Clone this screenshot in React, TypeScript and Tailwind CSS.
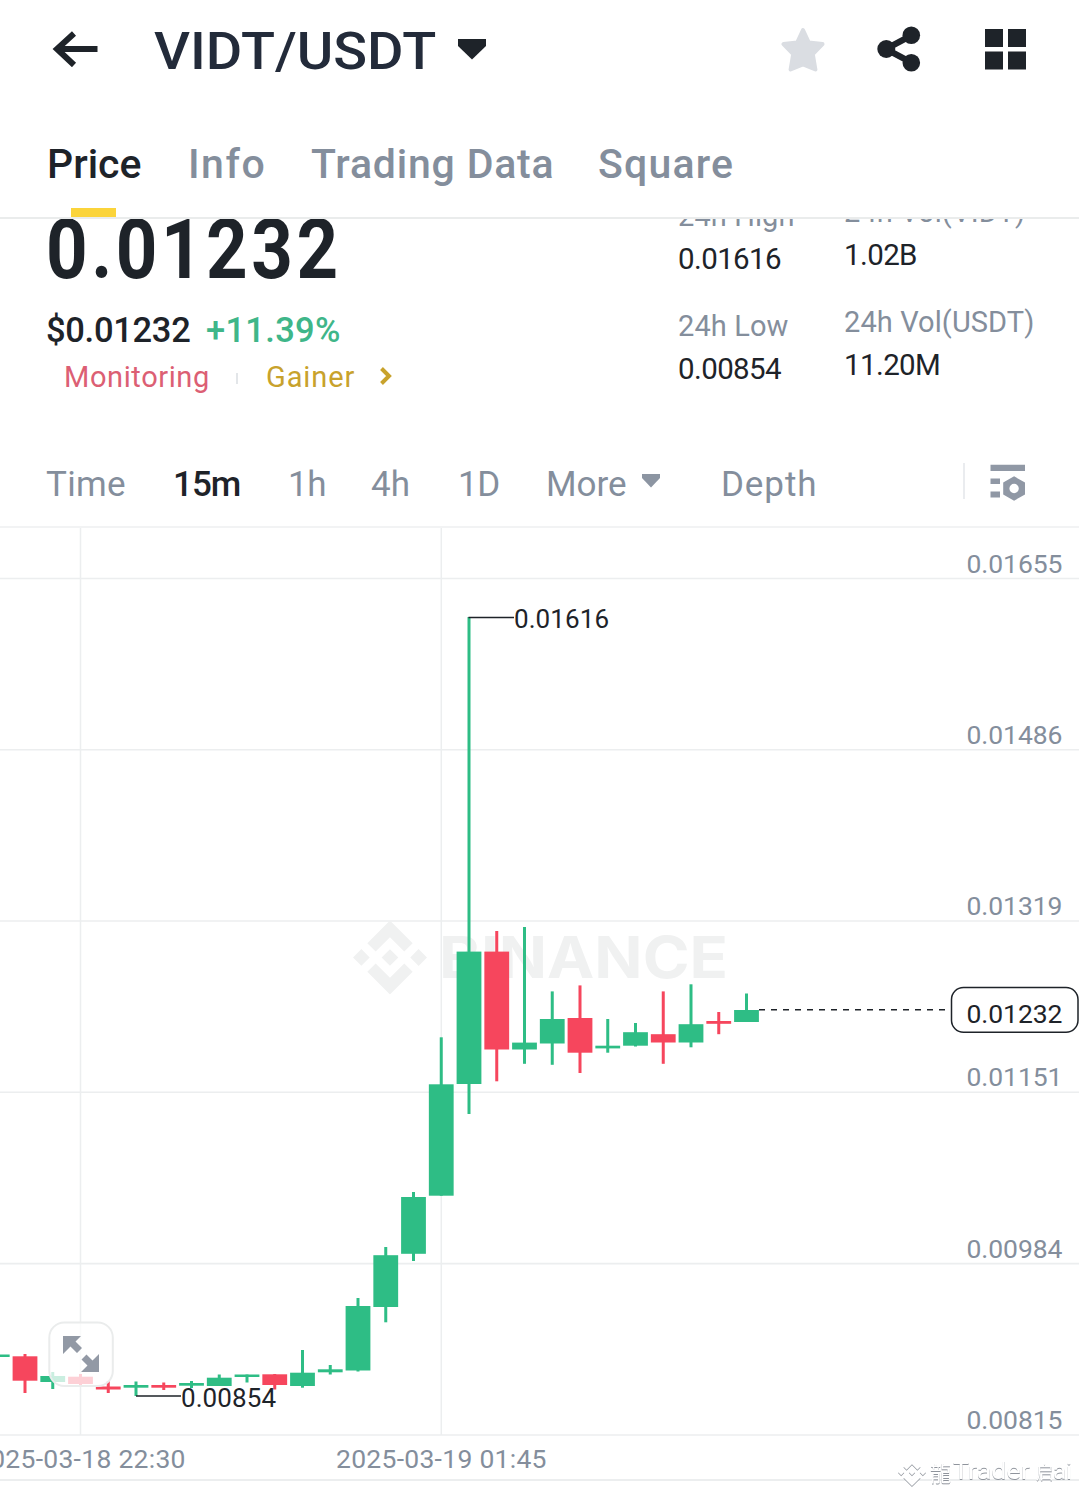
import { ReactNode } from 'react';
import { SiBinance } from 'react-icons/si';

const UP = '#2ebd85';
const DOWN = '#f6465d';
const GRID = '#eceeef';

type Candle = {
    open: number;
    close: number;
    high: number;
    low: number;
    up: boolean;
};

// y values on the chart canvas: [body top, body bottom, wick top, wick bottom, rising]
const rows: [number, number, number, number, boolean][] = [
    [1354.5, 1357, 1354.5, 1357, true],
    [1356.3, 1380.7, 1354, 1393, false],
    [1376, 1382, 1372, 1389, true],
    [1376.7, 1384, 1374, 1387, false],
    [1386.5, 1389.5, 1381, 1393, false],
    [1385, 1387.7, 1381.5, 1396, true],
    [1385, 1387.7, 1382.5, 1390, false],
    [1383, 1385.7, 1381, 1388, true],
    [1377.7, 1386, 1374.5, 1386, true],
    [1374.5, 1377, 1374.5, 1382.5, true],
    [1374.3, 1385, 1374, 1389.5, false],
    [1372.7, 1386, 1350, 1387.7, true],
    [1369.3, 1372.3, 1365, 1374.5, true],
    [1306, 1370.5, 1298, 1371.5, true],
    [1255.2, 1307, 1247, 1322.3, true],
    [1197, 1253.8, 1192, 1261, true],
    [1084.3, 1195.7, 1037.3, 1195.7, true],
    [951.6, 1084, 617, 1114, true],
    [951.6, 1049.5, 931, 1081.3, false],
    [1042.6, 1049.5, 927, 1063.8, true],
    [1019, 1043.5, 991.4, 1064.8, true],
    [1018, 1052.7, 985.4, 1073, false],
    [1045.7, 1048.4, 1019, 1052.7, true],
    [1032.2, 1045.7, 1023, 1046.5, true],
    [1034.2, 1042.5, 991.4, 1063.8, false],
    [1024.2, 1042.5, 984.3, 1047.3, true],
    [1021, 1023.8, 1012, 1034.2, false],
    [1010, 1022, 993.5, 1022, true],
];

const candles: Candle[] = rows.map(([open, close, high, low, up]) => ({ open, close, high, low, up }));

const priceAxis = [
    { label: '0.01655', line: 578.5, base: 573 },
    { label: '0.01486', line: 749.8, base: 744 },
    { label: '0.01319', line: 921, base: 915 },
    { label: '0.01151', line: 1092.3, base: 1086 },
    { label: '0.00984', line: 1263.6, base: 1258 },
    { label: '0.00815', line: 1435, base: 1429 },
];

const tabs = [
    { name: 'Price', style: 'w-[141px] text-[#1e2329]' },
    { name: 'Info', style: 'w-[123px] text-[#848e9c] tracking-[1.5px]' },
    { name: 'Trading Data', style: 'w-[287px] text-[#848e9c] tracking-[0.8px]' },
    { name: 'Square', style: 'text-[#848e9c] tracking-[1.2px]' },
];

const intervals = [
    { name: 'Time', style: 'w-[127px] text-[#848e9c] tracking-[0.3px]' },
    { name: '15m', style: 'w-[115px] text-[#1e2329] font-medium tracking-[-1px]' },
    { name: '1h', style: 'w-[83px] text-[#848e9c] tracking-[-0.5px]' },
    { name: '4h', style: 'w-[87px] text-[#848e9c]' },
    { name: '1D', style: 'w-[88px] text-[#848e9c] tracking-[-0.5px]' },
];

function Stat({ label, value }: { label: string; value: ReactNode }) {
    return (
        <div className="mb-[24px] whitespace-nowrap">
            <p className="h-[43px] leading-[43px] text-[29px] text-[#848e9c] tracking-[0.1px]">{label}</p>
            <p className="h-[43px] leading-[43px] text-[29.5px] text-[#1e2329] tracking-[-0.6px]">{value}</p>
        </div>
    );
}

function Header() {
    return (
        <header className="h-[102px] flex items-center pl-[52px] pr-[53px]">
            <svg width="46" height="36" viewBox="52 31 46 36" className="-mt-1">
                <path d="M97.500 49H58M74 33.500L57 49l17 16" fill="none" stroke="#1e2329" strokeWidth="6" />
            </svg>
            <h1 className="ml-[56px] w-[304px] text-[52.5px] leading-none font-medium text-[#232b3a] origin-left scale-x-[1.063] whitespace-nowrap">VIDT/USDT</h1>
            <svg width="28" height="21" viewBox="0 0 28 21" className="-mt-1">
                <path d="M0 0h28v7L14 20.500 0 7z" fill="#1e2329" />
            </svg>
            <div className="ml-auto flex items-center -mt-1">
                <svg width="44" height="46" viewBox="0 0 44 46" className="mt-[2px]">
                    <path
                        d="M22 3l5.800 12.500 13.700 1.600-9.700 9.900 2.600 15.500L22 37.500 9.600 42.500l2.600-15.500L2.500 17.100l13.700-1.600z"
                        fill="#dadde2" stroke="#dadde2" strokeWidth="4" strokeLinejoin="round"
                    />
                </svg>
                <svg width="44" height="46" viewBox="877 26 44 46" className="ml-[52px]">
                    <path d="M911.300 35.500L886 49l25.300 13.500" fill="none" stroke="#1e2329" strokeWidth="6.500" />
                    <circle cx="911.300" cy="35.200" r="8.800" fill="#1e2329" />
                    <circle cx="886.300" cy="49" r="9" fill="#1e2329" />
                    <circle cx="911.300" cy="62.700" r="8.800" fill="#1e2329" />
                </svg>
                <svg width="41" height="41" viewBox="0 0 41 41" className="ml-[64px]" fill="#1e2329">
                    <path d="M0 0h18v18H0zM23 0h18v18H23zM0 22.500h18v18H0zM23 22.500h18v18H23z" />
                </svg>
            </div>
        </header>
    );
}

function Summary() {
    return (
        <section className="h-[221px] flex overflow-hidden">
            <div className="w-[678px] pl-[46px]">
                <p className="h-[61px] leading-[61px] text-[82.5px] font-bold text-[#1e2329] tracking-[4px] origin-left scale-x-[0.88]">0.01232</p>
                <div className="mt-[28px] h-[46px] flex items-center text-[34.5px] font-medium">
                    <span className="w-[160px] text-[#1e2329] tracking-[-0.3px]">$0.01232</span>
                    <span className="text-[#3fb689] tracking-[0.3px]">+11.39%</span>
                </div>
                <div className="h-[48px] flex items-center pl-[18px] text-[29px]">
                    <span className="w-[172px] text-[#dc5f74] tracking-[0.6px]">Monitoring</span>
                    <span className="w-[2px] h-[11px] bg-[#e3e6e9]" />
                    <span className="ml-[28px] w-[114px] text-[#c8a22c] tracking-[0.9px]">Gainer</span>
                    <svg width="12" height="18" viewBox="0 0 12 18" className="-mt-1">
                        <path d="M1.500 1.500L9 9l-7.500 7.500" fill="none" stroke="#c8a22c" strokeWidth="4" />
                    </svg>
                </div>
            </div>
            <div className="w-[166px] -mt-[24px]">
                <Stat label="24h High" value="0.01616" />
                <Stat label="24h Low" value="0.00854" />
            </div>
            <div className="-mt-[28px]">
                <Stat label="24h Vol(VIDT)" value="1.02B" />
                <Stat label="24h Vol(USDT)" value="11.20M" />
            </div>
        </section>
    );
}

function IntervalBar() {
    return (
        <nav className="h-[88px] flex items-center pt-[5px] pl-[46px] pr-[53px] border-b-2 border-[#f2f3f4] text-[35px] whitespace-nowrap">
            {intervals.map((item) => (
                <span key={item.name} className={item.style}>{item.name}</span>
            ))}
            <span className="w-[96px] text-[#848e9c]">More</span>
            <svg width="18" height="14" viewBox="0 0 18 14" className="-mt-[9px]">
                <path d="M0 0h18v4L9 13.500 0 4z" fill="#8c95a2" />
            </svg>
            <span className="ml-[61px] text-[#848e9c] tracking-[0.9px]">Depth</span>
            <span className="ml-auto -mt-[9px] w-[2px] h-[36px] bg-[#eaecef]" />
            <svg width="36" height="37" viewBox="990.500 463.500 36 37" className="ml-[25px] -mt-[7px]" fill="#9098a5">
                <path d="M991 464.300h34.500v6.200H991zM991 478h9.500v5.500H991zM991 491h9.500v6H991z" />
                <path
                    fillRule="evenodd"
                    d="M1014.600 475.800l10.900 6.200v12l-10.900 6.200-10.900-6.200v-12zM1014.600 483.300a4.700 4.700 0 1 0 0 9.400 4.700 4.700 0 0 0 0-9.400z"
                />
            </svg>
        </nav>
    );
}

function Chart() {
    return (
        <svg width="1079" height="966" viewBox="0 528 1079 966" className="block">
            {/* grid */}
            {priceAxis.map((p) => (
                <path key={p.label} d={`M0 ${p.line}H1079`} stroke={GRID} strokeWidth="1.6" />
            ))}
            <path d="M80.500 528V1435M441.300 528V1435" stroke={GRID} strokeWidth="1.5" />
            <path d="M0 1480H1079" stroke={GRID} strokeWidth="2" />

            {/* watermark */}
            <SiBinance x="353" y="920.500" width="74" height="74" size={74} color="#f0f1f1" />
            <text x="439" y="978" fontSize="58" fontWeight="700" fill="#f0f1f1" textLength="289" lengthAdjust="spacingAndGlyphs" className="font-['Inter',sans-serif]">BINANCE</text>

            {candles.map((c, i) => {
                const x = -2.75 + i * 27.75;
                const color = c.up ? UP : DOWN;
                return (
                    <g key={i} fill={color}>
                        <rect x={x - 1.5} y={c.high} width="3" height={c.low - c.high} />
                        <rect x={x - 12.4} y={c.open} width="24.8" height={c.close - c.open} />
                    </g>
                );
            })}

            {/* high / low markers */}
            <path d="M468.500 617.500H514M136 1396H181" stroke="#1e2329" strokeWidth="1.5" />
            <g fontSize="26" fill="#1e2329">
                <text x="514" y="628" textLength="95">0.01616</text>
                <text x="181" y="1407" textLength="95">0.00854</text>
            </g>

            {/* axes */}
            <g fontSize="26.500" fill="#848e9c">
                {priceAxis.map((p) => (
                    <text key={p.label} x="966.500" y={p.base} textLength="96">{p.label}</text>
                ))}
                <text x="-25" y="1468" textLength="210.500">2025-03-18 22:30</text>
                <text x="336" y="1468" textLength="210.500">2025-03-19 01:45</text>
            </g>

            {/* last price */}
            <path d="M759 1009.700H948" stroke="#1e2329" strokeWidth="1.600" strokeDasharray="6 6" />
            <rect x="951.500" y="987.500" width="126.500" height="44.700" rx="12" fill="#fff" stroke="#1e2329" strokeWidth="1.500" />
            <text x="966.500" y="1023" fontSize="26.500" fill="#1e2329" textLength="96">0.01232</text>

            {/* expand button */}
            <rect x="49.300" y="1322.500" width="63.500" height="63.500" rx="15" fill="#fff" fillOpacity="0.75" stroke="#eaecec" strokeWidth="2" />
            <g fill="#9299a5">
                <path d="M63 1336h18l-5.500 5.500 6.500 6.500-5 5-6.500-6.500L63 1354z" />
                <path d="M99 1372H81l6.500-6.500-6-6 5-5 6 6 6.500-6.500z" />
            </g>

            {/* author tag */}
            <g className="[filter:drop-shadow(0.800px_1px_0.400px_#8f949c)]" fill="#fff">
                <SiBinance x="898" y="1458" width="28" height="28" size={28} color="#fff" />
                <text x="930" y="1481" fontSize="21" className="font-['Noto_Sans_CJK_SC',sans-serif]">&#x9F8D;</text>
                <text x="953" y="1479" fontSize="24" textLength="77" lengthAdjust="spacingAndGlyphs">Trader</text>
                <text x="1036" y="1479" fontSize="18" className="font-['Noto_Sans_CJK_SC',sans-serif]">启</text>
                <text x="1053" y="1479" fontSize="24">ai</text>
            </g>
        </svg>
    );
}

export default function App() {
    return (
        <div className="w-[1079px] h-[1494px] overflow-hidden bg-white font-['Roboto','Liberation_Sans',sans-serif]">
            <Header />
            <nav className="h-[117px] flex items-center pt-[10px] pl-[47px] border-b-2 border-[#eaecec] text-[41px] font-medium whitespace-nowrap">
                {tabs.map((tab, index) => (
                    <span key={tab.name} className={`relative ${tab.style}`}>
                        {tab.name}
                        {index === 0 && <i className="absolute left-[24px] top-[74px] w-[45px] h-[9px] bg-[#fbd43b]" />}
                    </span>
                ))}
            </nav>
            <Summary />
            <IntervalBar />
            <Chart />
        </div>
    );
}
